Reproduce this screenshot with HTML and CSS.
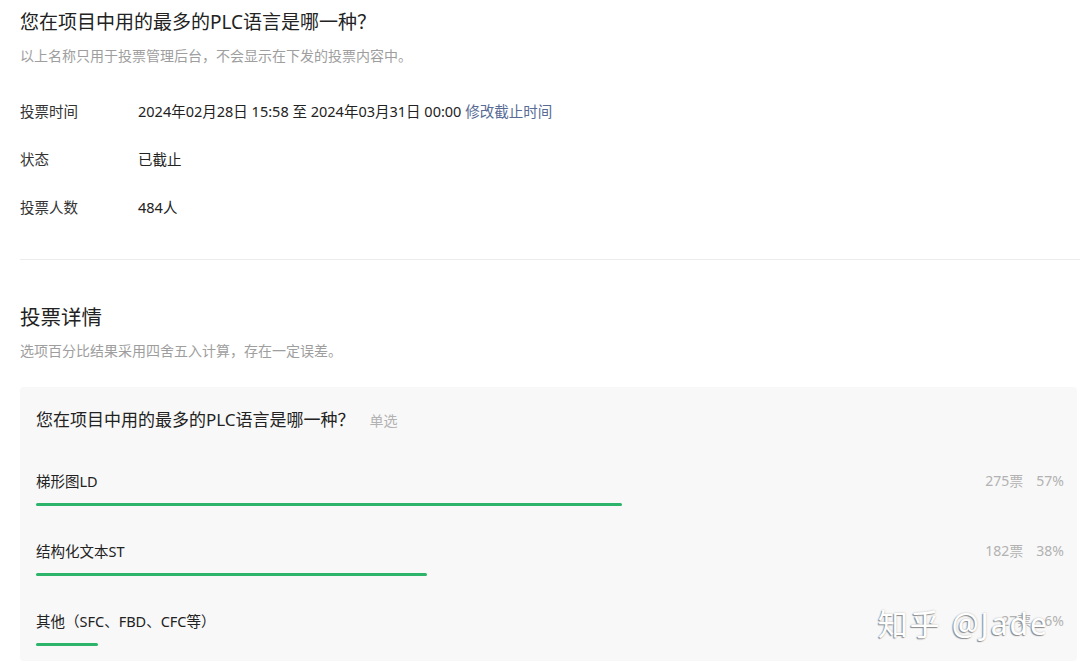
FILE: index.html
```html
<!DOCTYPE html>
<html lang="zh-CN">
<head>
<meta charset="utf-8">
<title>投票</title>
<link rel="stylesheet" href="styles.css">
</head>
<body>
<div class="page">
  <h1 class="title">您在项目中用的最多的PLC语言是哪一种？</h1>
  <p class="tip">以上名称只用于投票管理后台，不会显示在下发的投票内容中。</p>
  <div class="info">
    <div class="row"><span class="label">投票时间</span><span class="value">2024年02月28日 15:58 至 2024年03月31日 00:00 <a class="link">修改截止时间</a></span></div>
    <div class="row"><span class="label">状态</span><span class="value">已截止</span></div>
    <div class="row"><span class="label">投票人数</span><span class="value">484人</span></div>
  </div>
  <div class="divider"></div>
  <h2 class="title">投票详情</h2>
  <p class="tip">选项百分比结果采用四舍五入计算，存在一定误差。</p>
  <div class="card">
    <div class="q">您在项目中用的最多的PLC语言是哪一种？<span class="type">单选</span></div>
    <div class="options">
      <div class="opt">
        <div class="opt-head"><span class="opt-name">梯形图LD</span><span class="opt-stat"><span>275票</span><span>57%</span></span></div>
        <div class="track"><div class="bar" style="width:57%"></div></div>
      </div>
      <div class="opt">
        <div class="opt-head"><span class="opt-name">结构化文本ST</span><span class="opt-stat"><span>182票</span><span>38%</span></span></div>
        <div class="track"><div class="bar" style="width:38%"></div></div>
      </div>
      <div class="opt">
        <div class="opt-head"><span class="opt-name">其他（SFC、FBD、CFC等）</span><span class="opt-stat"><span>27票</span><span>6%</span></span></div>
        <div class="track"><div class="bar" style="width:6%"></div></div>
      </div>
    </div>
    <div class="watermark">知乎 @Jade</div>
  </div>
</div>
</body>
</html>
```

FILE: styles.css
```css
html, body {
  margin: 0;
  padding: 0;
  background: #fff;
}
body {
  font-family: "Noto Sans", "Noto Sans CJK SC", sans-serif;
  color: #353535;
  font-size: 14.5px;
}
.page {
  padding: 9px 0 0 20px;
}
.title {
  margin: 0;
  font-size: 19px;
  line-height: 26px;
  font-weight: 400;
  color: #222;
}
.tip {
  margin: 11px 0 0;
  font-size: 14px;
  line-height: 20px;
  color: #9e9e9e;
}
.info {
  margin-top: 35px;
  display: flex;
  flex-direction: column;
  gap: 28px;
}
.row {
  display: flex;
  line-height: 20px;
}
.label {
  width: 118px;
  flex: none;
  color: #333;
}
.value {
  color: #222;
}
.link {
  color: #576b95;
}
.divider {
  margin-top: 42px;
  height: 1px;
  background: #ececec;
}
h2.title {
  margin-top: 44px;
  font-size: 20.5px;
}
.card {
  position: relative;
  margin: 26px 3px 0 0;
  background: #f8f8f8;
  border-radius: 4px;
  padding: 22px 13px 15px 16px;
}
.q {
  font-size: 17px;
  line-height: 22px;
  color: #222;
}
.type {
  font-size: 14px;
  color: #b2b2b2;
  margin-left: 15px;
}
.options {
  margin-top: 39px;
  display: flex;
  flex-direction: column;
  gap: 35px;
}
.opt-head {
  display: flex;
  justify-content: space-between;
  line-height: 20px;
}
.opt-name {
  color: #222;
}
.opt-stat {
  display: flex;
  gap: 13px;
  font-size: 14px;
  color: #b2b2b2;
}
.track {
  margin-top: 12px;
  height: 3px;
}
.bar {
  height: 3px;
  background: #2bb46a;
  border-radius: 2px;
}
.watermark {
  position: absolute;
  right: 28px;
  bottom: 18px;
  font-size: 30px;
  line-height: 38px;
  color: #fff;
  letter-spacing: 2px;
  text-shadow: -1px 1px 1px #8a8a8a, 0 0 2px rgba(0,0,0,0.25);
}
```
